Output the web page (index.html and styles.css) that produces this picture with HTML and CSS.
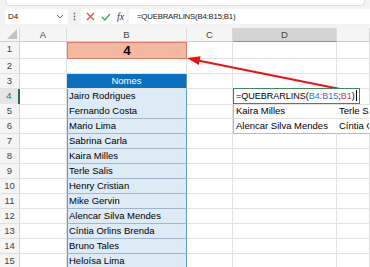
FILE: index.html
```html
<!DOCTYPE html>
<html lang="pt">
<head>
    <meta charset="UTF-8">
    <title>QUEBRARLINS</title>
    <link rel="stylesheet" href="styles.css">
</head>
<body>
    <div class="ribbon"></div>
    <div class="formula-bar">
        <div class="name-box">
            <span>D4</span>
            <svg class="chevron" width="8" height="5" viewBox="0 0 8 5"><path d="M1 1 L4 4 L7 1" fill="none" stroke="#666" stroke-width="1"/></svg>
        </div>
        <div class="bar-dots">
            <svg width="3" height="9" viewBox="0 0 3 9"><circle cx="1.5" cy="1.5" r="0.9" fill="#777"/><circle cx="1.5" cy="4.5" r="0.9" fill="#777"/><circle cx="1.5" cy="7.5" r="0.9" fill="#777"/></svg>
        </div>
        <div class="bar-buttons">
            <svg width="9" height="9" viewBox="0 0 9 9"><path d="M1 1 L8 8 M8 1 L1 8" stroke="#e24a4a" stroke-width="1.2"/></svg>
            <svg width="10" height="8" viewBox="0 0 10 8"><path d="M1 4 L3.8 7 L9 1" fill="none" stroke="#3fa55c" stroke-width="1.2"/></svg>
            <span class="fx">fx</span>
        </div>
        <div class="formula-input">=QUEBRARLINS(B4:B15;B1)</div>
    </div>

    <div class="sheet">
        <div class="row head">
            <div class="cell corner"><span class="corner-mark"></span></div>
            <div class="cell col">A</div>
            <div class="cell col">B</div>
            <div class="cell col">C</div>
            <div class="cell col active">D</div>
            <div class="cell col"></div>
        </div>
        <div class="row tall">
            <div class="cell num">1</div>
            <div class="cell"></div>
            <div class="cell result">4</div>
            <div class="cell"></div>
            <div class="cell"></div>
            <div class="cell"></div>
        </div>
        <div class="row">
            <div class="cell num">2</div>
            <div class="cell"></div>
            <div class="cell"></div>
            <div class="cell"></div>
            <div class="cell"></div>
            <div class="cell"></div>
        </div>
        <div class="row">
            <div class="cell num">3</div>
            <div class="cell"></div>
            <div class="cell table-head">Nomes</div>
            <div class="cell"></div>
            <div class="cell"></div>
            <div class="cell"></div>
        </div>
        <div class="row">
            <div class="cell num active">4</div>
            <div class="cell"></div>
            <div class="cell table-cell">Jairo Rodrigues</div>
            <div class="cell"></div>
            <div class="cell editing">
                <div class="edit-box">=QUEBRARLINS(<span class="ref-blue">B4:B15</span>;<span class="ref-red">B1</span>)<span class="caret"></span></div>
            </div>
            <div class="cell"></div>
        </div>
        <div class="row">
            <div class="cell num">5</div>
            <div class="cell"></div>
            <div class="cell table-cell">Fernando Costa</div>
            <div class="cell"></div>
            <div class="cell spill spill-left">Kaira Milles</div>
            <div class="cell spill">Terle Salis</div>
        </div>
        <div class="row">
            <div class="cell num">6</div>
            <div class="cell"></div>
            <div class="cell table-cell">Mario Lima</div>
            <div class="cell"></div>
            <div class="cell spill spill-left spill-bottom">Alencar Silva Mendes</div>
            <div class="cell spill spill-bottom">Cíntia Orlins Brenda</div>
        </div>
        <div class="row">
            <div class="cell num">7</div>
            <div class="cell"></div>
            <div class="cell table-cell">Sabrina Carla</div>
            <div class="cell"></div>
            <div class="cell"></div>
            <div class="cell"></div>
        </div>
        <div class="row">
            <div class="cell num">8</div>
            <div class="cell"></div>
            <div class="cell table-cell">Kaira Milles</div>
            <div class="cell"></div>
            <div class="cell"></div>
            <div class="cell"></div>
        </div>
        <div class="row">
            <div class="cell num">9</div>
            <div class="cell"></div>
            <div class="cell table-cell">Terle Salis</div>
            <div class="cell"></div>
            <div class="cell"></div>
            <div class="cell"></div>
        </div>
        <div class="row">
            <div class="cell num">10</div>
            <div class="cell"></div>
            <div class="cell table-cell">Henry Cristian</div>
            <div class="cell"></div>
            <div class="cell"></div>
            <div class="cell"></div>
        </div>
        <div class="row">
            <div class="cell num">11</div>
            <div class="cell"></div>
            <div class="cell table-cell">Mike Gervin</div>
            <div class="cell"></div>
            <div class="cell"></div>
            <div class="cell"></div>
        </div>
        <div class="row">
            <div class="cell num">12</div>
            <div class="cell"></div>
            <div class="cell table-cell">Alencar Silva Mendes</div>
            <div class="cell"></div>
            <div class="cell"></div>
            <div class="cell"></div>
        </div>
        <div class="row">
            <div class="cell num">13</div>
            <div class="cell"></div>
            <div class="cell table-cell">Cíntia Orlins Brenda</div>
            <div class="cell"></div>
            <div class="cell"></div>
            <div class="cell"></div>
        </div>
        <div class="row">
            <div class="cell num">14</div>
            <div class="cell"></div>
            <div class="cell table-cell">Bruno Tales</div>
            <div class="cell"></div>
            <div class="cell"></div>
            <div class="cell"></div>
        </div>
        <div class="row">
            <div class="cell num">15</div>
            <div class="cell"></div>
            <div class="cell table-cell">Heloísa Lima</div>
            <div class="cell"></div>
            <div class="cell"></div>
            <div class="cell"></div>
        </div>
    </div>

    <!-- seta apontando o resultado em B1 -->
    <svg class="arrow" width="370" height="267" viewBox="0 0 370 267">
        <line x1="198" y1="60.4" x2="350" y2="91" stroke="#f01010" stroke-width="2"/>
        <polygon points="187,58 200.6,56.2 198.8,65" fill="#f01010"/>
    </svg>
</body>
</html>
```

FILE: styles.css
```css
body {
    margin: 0;
    width: 370px;
    height: 267px;
    overflow: hidden;
    position: relative;
    background-color: #f3f3f3;
    font-family: "Liberation Sans", Arial, sans-serif;
    color: #000;
}
.ribbon {
    height: 5px;
    margin: 0 5px;
    background-color: #fff;
    border: 1px solid #dedede;
    border-top: none;
    border-radius: 0 0 5px 5px;
}
.formula-bar {
    display: flex;
    align-items: center;
    height: 15px;
    margin: 3px 0 4px 5px;
}
.name-box {
    width: 63px;
    height: 15px;
    box-sizing: border-box;
    display: flex;
    align-items: center;
    justify-content: space-between;
    padding: 0 4px 0 3px;
    background-color: #fff;
    border-radius: 3px;
    font-size: 8px;
    color: #222;
}
.bar-dots {
    width: 13px;
    display: flex;
    justify-content: center;
}
.bar-dots svg {
    display: block;
}
.bar-buttons {
    width: 45px;
    height: 15px;
    box-sizing: border-box;
    display: flex;
    align-items: center;
    gap: 6px;
    padding-left: 5px;
    background-color: #fff;
    border-radius: 3px;
}
.fx {
    font-family: "Liberation Serif", serif;
    font-style: italic;
    font-size: 10px;
    color: #333;
}
.formula-input {
    flex: 1;
    height: 15px;
    margin-left: 3px;
    padding-left: 8px;
    background-color: #fff;
    border-radius: 3px 0 0 3px;
    font-size: 7.8px;
    letter-spacing: -0.2px;
    line-height: 15px;
    color: #222;
}
.sheet {
    background-color: #fff;
}
.row {
    display: grid;
    grid-template-columns: 20px 47px 120px 46px 104px 1fr;
    height: 15px;
}
.row.head {
    height: 14px;
}
.row.tall {
    height: 17px;
}
.cell {
    box-sizing: border-box;
    min-width: 0;
    border-right: 1px solid #e2e2e2;
    border-bottom: 1px solid #e2e2e2;
    padding: 0 2px;
    font-size: 9.5px;
    line-height: 14px;
    white-space: nowrap;
    overflow: hidden;
}
.head .cell {
    background-color: #f5f5f5;
    border-bottom-color: #cfcfcf;
    border-right-color: #dadada;
    text-align: center;
    line-height: 13px;
    color: #444;
}
.head .cell.active {
    background-color: #d4d4d4;
    border-bottom: 1px solid #6f9f80;
}
.corner {
    position: relative;
}
.corner-mark {
    position: absolute;
    right: 2px;
    bottom: 2px;
    width: 10px;
    height: 10px;
    background-color: #c3c3c3;
    clip-path: polygon(100% 0, 100% 100%, 0 100%);
}
.num {
    background-color: #f5f5f5;
    border-right-color: #d2d2d2;
    text-align: center;
    color: #444;
}
.num.active {
    color: #217346;
    border-right: 2px solid #217346;
    background-color: #e6e6e6;
}
.result {
    background-color: #f4b8a1;
    border: 1px solid #dc7b6c;
    text-align: center;
    font-weight: bold;
    font-size: 13.5px;
    line-height: 15px;
}
.table-head {
    background-color: #0b6fc0;
    color: #fff;
    text-align: center;
    border-right-color: #5b9bd5;
}
.table-cell {
    background-color: #ddebf7;
    border-left: 1px solid #5b9bd5;
    border-right: 1px solid #5b9bd5;
    border-bottom-color: #9fb6cc;
    padding-left: 1px;
}
.editing {
    overflow: visible;
    padding: 0;
}
.edit-box {
    position: relative;
    z-index: 1;
    width: max-content;
    height: 16px;
    margin-top: -1px;
    box-sizing: border-box;
    padding: 0 2px;
    background-color: #fff;
    border: 1px solid #3f8a5c;
    font-size: 9px;
    line-height: 14px;
}
.ref-blue {
    color: #2f76c8;
}
.ref-red {
    color: #d0403c;
}
.caret {
    display: inline-block;
    width: 1px;
    height: 11px;
    margin-left: 1px;
    vertical-align: -2px;
    background-color: #000;
}
.spill {
    border-right-color: transparent;
}
.spill-left {
    border-left: 1px solid #9cc0e4;
}
.spill-bottom {
    border-bottom-color: #9cc0e4;
}
.arrow {
    position: absolute;
    top: 0;
    left: 0;
    pointer-events: none;
}
```
